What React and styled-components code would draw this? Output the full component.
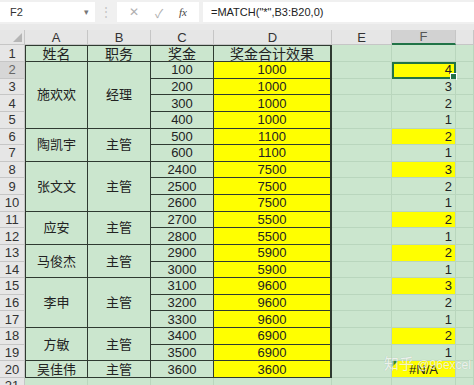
import React from 'react';
import styled, { createGlobalStyle } from 'styled-components';

const GlobalStyle = createGlobalStyle`
    html, body {
        margin: 0;
        padding: 0;
        background: #e9e9e9;
        overflow: hidden;
    }
    * {
        box-sizing: border-box;
    }
`;

const FONT = `"Liberation Sans", "Noto Sans CJK SC", sans-serif`;
const GREEN = '#cbe6ce';
const YELLOW = '#ffff00';
const DARK = '#2f3a31';
const GRID = '#b9d6bd';
const HEAD = '#e6e6e6';
const HEAD_LINE = '#c6c6c6';

const groups = [
    { name: '施欢欢', role: '经理', bonus: [100, 200, 300, 400], total: 1000 },
    { name: '陶凯宇', role: '主管', bonus: [500, 600], total: 1100 },
    { name: '张文文', role: '主管', bonus: [2400, 2500, 2600], total: 7500 },
    { name: '应安', role: '主管', bonus: [2700, 2800], total: 5500 },
    { name: '马俊杰', role: '主管', bonus: [2900, 3000], total: 5900 },
    { name: '李申', role: '主管', bonus: [3100, 3200, 3300], total: 9600 },
    { name: '方敏', role: '主管', bonus: [3400, 3500], total: 6900 },
    { name: '吴佳伟', role: '主管', bonus: [3600], total: 3600 },
];

const App = () => {
    let rowNo = 2;
    const body = [];
    groups.forEach((g, gi) => {
        const last = gi === groups.length - 1;
        g.bonus.forEach((b, i) => {
            const n = rowNo++;
            body.push(<RowHead key={'h' + n} $active={n === 2}>{n}</RowHead>);
            if (i === 0) {
                body.push(
                    <Cell key={'a' + n} $span={g.bonus.length} $first $tone="table">{g.name}</Cell>,
                    <Cell key={'b' + n} $span={g.bonus.length} $tone="table">{g.role}</Cell>
                );
            }
            body.push(
                <Cell key={'c' + n} $tone="table">{b}</Cell>,
                <Cell key={'d' + n} $tone="table" $yellow $lastCol>{g.total}</Cell>,
                <Cell key={'e' + n} $tone="grid" />
            );
            const f = last ? '#N/A' : g.bonus.length - i;
            body.push(
                <FCell
                    key={'f' + n}
                    $yellow={i === 0}
                    $selected={n === 2}
                    $error={last}
                    $center={last}
                >
                    {f}
                </FCell>,
                <Cell key={'g' + n} $tone="grid" />
            );
        });
    });

    return (
        <Page>
            <GlobalStyle />
            <FormulaBar>
                <NameBox>
                    <span>F2</span>
                    <Caret>▾</Caret>
                </NameBox>
                <Dots>⋮</Dots>
                <ButtonBox>
                    <BarIcon>✕</BarIcon>
                    <BarIcon>✓</BarIcon>
                    <BarIcon $italic>fx</BarIcon>
                </ButtonBox>
                <FormulaInput>=MATCH("*",B3:B20,0)</FormulaInput>
            </FormulaBar>
            <Band />
            <Sheet>
                <Corner />
                <ColHead>A</ColHead>
                <ColHead>B</ColHead>
                <ColHead>C</ColHead>
                <ColHead>D</ColHead>
                <ColHead>E</ColHead>
                <ColHead $active>F</ColHead>
                <ColHead />

                <RowHead>1</RowHead>
                <Cell $tone="table" $first $top $title>姓名</Cell>
                <Cell $tone="table" $top $title>职务</Cell>
                <Cell $tone="table" $top $title>奖金</Cell>
                <Cell $tone="table" $top $title $lastCol>奖金合计效果</Cell>
                <Cell $tone="grid" />
                <Cell $tone="grid" />
                <Cell $tone="grid" />

                {body}

                <RowHead>21</RowHead>
                <Cell $tone="grid" />
                <Cell $tone="grid" />
                <Cell $tone="grid" />
                <Cell $tone="grid" />
                <Cell $tone="grid" />
                <Cell $tone="grid" />
                <Cell $tone="grid" />
            </Sheet>
            <Watermark>
                <big>知乎</big> @96excel
            </Watermark>
        </Page>
    );
};

const Page = styled.div`
    position: relative;
    width: 474px;
    height: 385px;
    overflow: hidden;
    font-family: ${FONT};
    background: ${GREEN};
`;

const FormulaBar = styled.div`
    height: 24px;
    display: flex;
    align-items: stretch;
    gap: 4px;
    padding: 2px 0;
    background: #f0f0f0;
    font-size: 11px;
    color: #333;
`;

const NameBox = styled.div`
    width: 95px;
    background: #fff;
    display: flex;
    align-items: center;
    justify-content: space-between;
    padding: 0 6px 0 10px;
`;

const Caret = styled.span`
    font-size: 9px;
    color: #777;
`;

const Dots = styled.div`
    width: 14px;
    display: flex;
    align-items: center;
    justify-content: center;
    color: #c4c4c4;
    font-size: 12px;
`;

const ButtonBox = styled.div`
    width: 82px;
    background: #fff;
    display: flex;
    align-items: center;
    justify-content: space-around;
    padding: 0 4px;
`;

const BarIcon = styled.span`
    color: ${p => (p.$italic ? '#444' : '#b0b0b0')};
    font-family: ${p => (p.$italic ? '"Liberation Serif", serif' : FONT)};
    font-style: ${p => (p.$italic ? 'italic' : 'normal')};
    font-size: ${p => (p.$italic ? '11px' : '12px')};
`;

const FormulaInput = styled.div`
    flex: 1;
    background: #fff;
    display: flex;
    align-items: center;
    padding-left: 8px;
    font-size: 11px;
    color: #222;
`;

const Band = styled.div`
    height: 6px;
    background: #e9e9e9;
`;

const Sheet = styled.div`
    display: grid;
    grid-template-columns: 25px 63px 63px 63px 118px 60px 64px 1fr;
    grid-template-rows: 15px 17px repeat(19, 16.63px) 16px;
`;

const Corner = styled.div`
    position: relative;
    background: ${HEAD};
    border-right: 1px solid ${HEAD_LINE};
    border-bottom: 1px solid ${HEAD_LINE};
    &::after {
        content: '';
        position: absolute;
        right: 2px;
        bottom: 2px;
        border-left: 9px solid transparent;
        border-bottom: 9px solid #b5b5b5;
    }
`;

const ColHead = styled.div`
    background: ${p => (p.$active ? '#d2d2d2' : HEAD)};
    border-right: 1px solid ${HEAD_LINE};
    border-bottom: ${p => (p.$active ? '2px solid #217346' : `1px solid ${HEAD_LINE}`)};
    display: flex;
    align-items: center;
    justify-content: center;
    font-size: 13px;
    color: ${p => (p.$active ? '#555' : '#333')};
    line-height: 1;
`;

const RowHead = styled.div`
    background: ${p => (p.$active ? '#d6d6d6' : HEAD)};
    border-right: 1px solid ${HEAD_LINE};
    border-bottom: 1px solid ${HEAD_LINE};
    display: flex;
    align-items: center;
    justify-content: center;
    font-size: 13px;
    color: ${p => (p.$active ? '#666' : '#333')};
    line-height: 1;
`;

const Cell = styled.div`
    grid-row: ${p => (p.$span ? `span ${p.$span}` : 'auto')};
    background: ${p => (p.$yellow ? YELLOW : GREEN)};
    border-right: 1px solid ${p => (p.$tone === 'table' ? DARK : GRID)};
    border-bottom: 1px solid ${p => (p.$tone === 'table' ? DARK : GRID)};
    border-left: ${p => (p.$first ? `1px solid ${DARK}` : 'none')};
    border-top: ${p => (p.$top ? `1px solid ${DARK}` : 'none')};
    border-right-width: ${p => (p.$lastCol ? '2px' : '1px')};
    display: flex;
    align-items: center;
    justify-content: center;
    font-size: ${p => (p.$title ? '14px' : '13px')};
    color: #222;
    line-height: 1;
    white-space: nowrap;
`;

const FCell = styled.div`
    position: relative;
    background: ${p => (p.$yellow ? YELLOW : GREEN)};
    border-right: 1px solid ${GRID};
    border-bottom: 1px solid ${GRID};
    display: flex;
    align-items: center;
    justify-content: ${p => (p.$center ? 'center' : 'flex-end')};
    padding: 0 3px;
    font-size: 13px;
    color: #222;
    line-height: 1;
    outline: ${p => (p.$selected ? '2px solid #217346' : 'none')};
    outline-offset: -2px;
    &::after {
        content: '';
        display: ${p => (p.$selected ? 'block' : 'none')};
        position: absolute;
        right: -2px;
        bottom: -2px;
        width: 5px;
        height: 5px;
        background: #217346;
        border: 1px solid #fff;
    }
    &::before {
        content: '';
        display: ${p => (p.$error ? 'block' : 'none')};
        position: absolute;
        left: 0;
        top: 0;
        border-top: 6px solid #2e8b3a;
        border-right: 6px solid transparent;
    }
`;

const Watermark = styled.div`
    position: absolute;
    left: 384px;
    top: 352px;
    font-size: 12px;
    color: rgba(255, 255, 255, 0.8);
    text-shadow: 0 0 1px rgba(0, 0, 0, 0.2);
    white-space: nowrap;
    pointer-events: none;
    big {
        font-size: 15px;
    }
`;

export default App;
